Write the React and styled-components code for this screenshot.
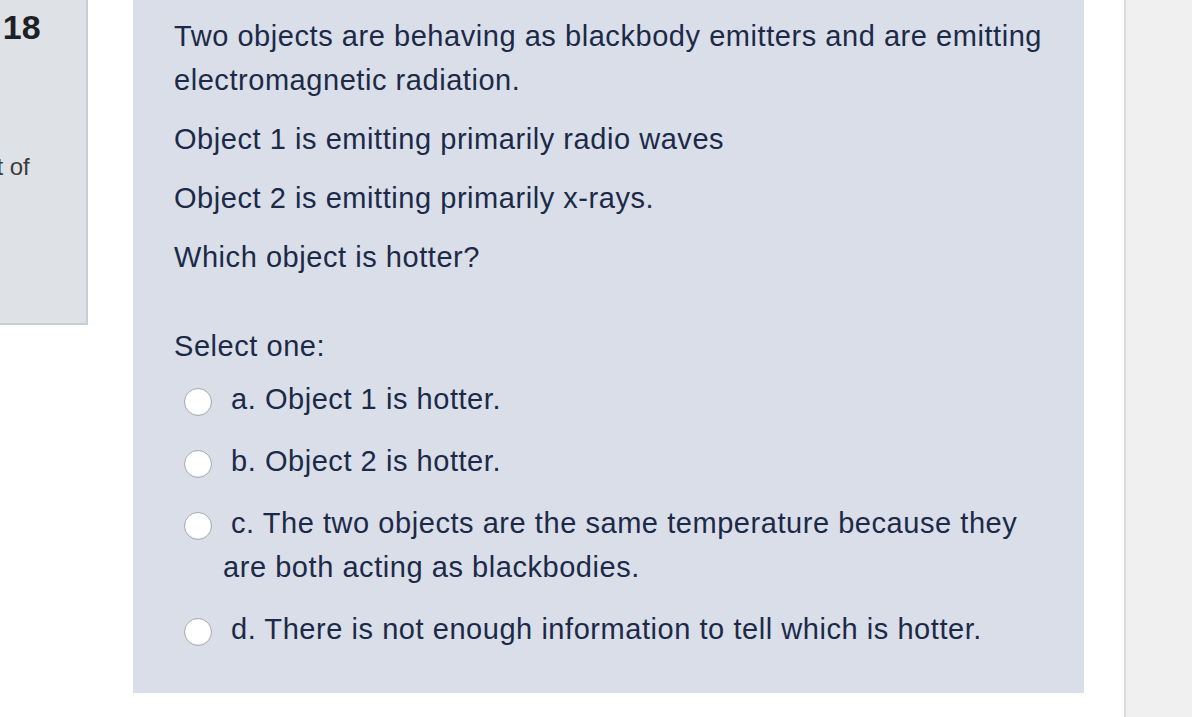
import React from "react";
import styled, { createGlobalStyle } from "styled-components";

const GlobalStyle = createGlobalStyle`
  html, body { margin: 0; padding: 0; background: #ffffff; }
  body { font-family: "Liberation Sans", Arial, sans-serif; overflow: hidden; }
  * { box-sizing: border-box; }
`;

const Page = styled.div`
  display: flex;
  align-items: flex-start;
  width: 1192px;
  height: 717px;
  overflow: hidden;
`;

const InfoPanel = styled.aside`
  flex: 0 0 88px;
  height: 325px;
  background: #dee2e7;
  border-right: 2px solid #c9ced6;
  border-bottom: 2px solid #c9ced6;
  overflow: hidden;
`;

const InfoContent = styled.div`
  width: 150px;
  margin-left: -117px;
  padding-top: 7px;
  color: #3a3b3d;
  font-size: 24px;
  line-height: 36px;
`;

const QuestionNo = styled.h3`
  margin: 0 0 0 -37px;
  font-size: 34px;
  line-height: 40px;
  font-weight: 700;
  white-space: nowrap;
  color: #1d2125;
`;

const InfoLine = styled.div`
  margin-top: ${(p) => p.$gap}px;
`;

const Formulation = styled.main`
  flex: 0 0 951px;
  margin-left: 45px;
  background: #d9dee8;
  padding: 14px 41px 42px 41px;
  color: #1c2a48;
  font-size: 29px;
  letter-spacing: 0.55px;
  line-height: 44px;
`;

const QText = styled.div`
  margin-bottom: 45px;
`;

const Para = styled.p`
  margin: 0 0 15px 0;
`;

const Prompt = styled.div`
  margin-bottom: 9px;
`;

const Answers = styled.div`
  display: flex;
  flex-direction: column;
  gap: 18px;
`;

const Option = styled.label`
  display: flex;
  align-items: flex-start;
  padding-left: 10px;
  gap: 11px;
`;

const Radio = styled.span`
  flex: 0 0 28px;
  width: 28px;
  height: 28px;
  margin-top: 11px;
  border-radius: 50%;
  background: radial-gradient(circle at 50% 40%, #ffffff 60%, #f4f4f4 100%);
  border: 1px solid #a9abae;
  box-shadow: inset 0 -1px 1px rgba(0, 0, 0, 0.06);
`;

const OptionText = styled.span`
  flex: 1;
  text-indent: 8px;
`;

const SideStrip = styled.div`
  flex: 1;
  align-self: stretch;
  margin-left: 40px;
  background: #f0f0f0;
  border-left: 2px solid #dcdcdc;
`;

const options = [
  "a. Object 1 is hotter.",
  "b. Object 2 is hotter.",
  "c. The two objects are the same temperature because they are both acting as blackbodies.",
  "d. There is not enough information to tell which is hotter.",
];

export default function App() {
  return (
    <>
      <GlobalStyle />
      <Page>
        <InfoPanel>
          <InfoContent>
            <QuestionNo>Question 18</QuestionNo>
            <InfoLine $gap={18}>Not yet answered</InfoLine>
            <InfoLine $gap={12}>Marked out of 1.00</InfoLine>
          </InfoContent>
        </InfoPanel>
        <Formulation>
          <QText>
            <Para>
              Two objects are behaving as blackbody emitters and are emitting
              electromagnetic radiation.
            </Para>
            <Para>Object 1 is emitting primarily radio waves</Para>
            <Para>Object 2 is emitting primarily x-rays.</Para>
            <Para>Which object is hotter?</Para>
          </QText>
          <Prompt>Select one:</Prompt>
          <Answers>
            {options.map((o) => (
              <Option key={o}>
                <Radio />
                <OptionText>{o}</OptionText>
              </Option>
            ))}
          </Answers>
        </Formulation>
        <SideStrip />
      </Page>
    </>
  );
}
